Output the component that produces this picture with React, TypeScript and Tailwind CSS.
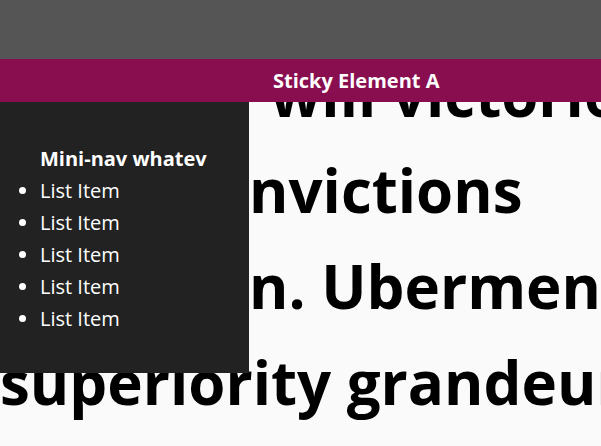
export default function App() {
  const items = ["List Item", "List Item", "List Item", "List Item", "List Item"];
  return (
    <div className="w-[601px] h-[446px] overflow-hidden bg-[#fafafa] font-['Open_Sans',sans-serif]">
      <header className="h-[59px] bg-[#555555]" />
      <div className="relative z-10 h-[43px] bg-[#880e4f] flex items-center pl-[273px]">
        <span className="text-white font-bold text-[20px] leading-none">Sticky Element A</span>
      </div>
      <main className="relative h-[344px] overflow-hidden">
        <div className="-mt-[56px] text-black font-bold text-[60px] leading-[96px] whitespace-nowrap">
          <div className="pl-[270px]">will victorious</div>
          <div className="flex">
            <span className="w-[249px] shrink-0 overflow-hidden text-right">co</span>
            <span>nvictions</span>
          </div>
          <div className="flex">
            <span className="w-[249px] shrink-0 overflow-hidden text-right">io</span>
            <span>n. Ubermensch</span>
          </div>
          <div>superiority grandeur</div>
        </div>
        <nav className="absolute left-0 top-0 w-[249px] h-[271px] bg-[#222222] text-white pt-[41px] text-[20px] leading-[32px]">
          <div className="pl-10 font-bold">Mini-nav whatev</div>
          <ul className="list-disc pl-10">
            {items.map((t, i) => (
              <li key={i}>{t}</li>
            ))}
          </ul>
        </nav>
      </main>
    </div>
  );
}
